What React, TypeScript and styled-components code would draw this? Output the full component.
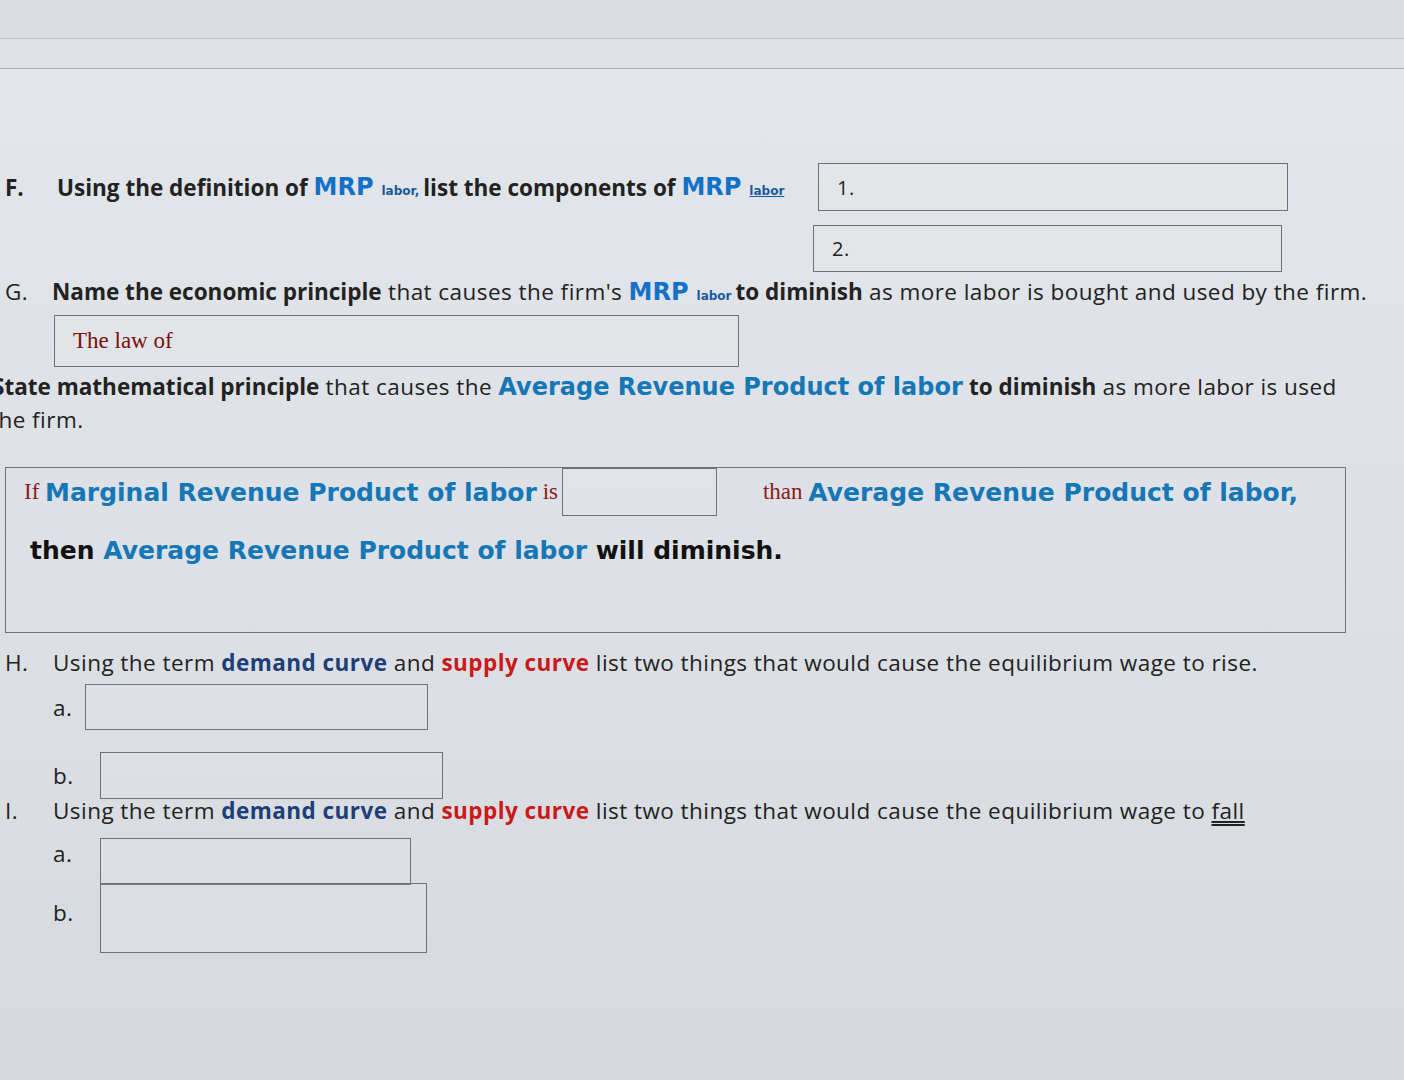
import React from "react";
import styled, { createGlobalStyle } from "styled-components";

const G = createGlobalStyle`
  body { margin:0; background:#dde1e6; font-family:"Open Sans","Liberation Sans",sans-serif; color:#222; }
`;
const Page = styled.div`width:1404px;height:1080px;overflow:hidden;background:linear-gradient(180deg,#e3e6ea 0%,#dcdfe4 60%,#d6dade 100%);`;
const TopBand = styled.div`height:38px;background:#d9dde1;border-bottom:1px solid #b9bec4;`;
const SubBand = styled.div`height:29px;background:#dfe2e6;border-bottom:1px solid #a9b0b7;`;
const Row = styled.div<{ $top?: number; $left?: number }>`
  display:flex;align-items:center;margin-top:${p => p.$top ?? 0}px;padding-left:${p => p.$left ?? 0}px;
  font-size:22.5px;letter-spacing:0.45px;white-space:nowrap;
`;
const Label = styled.span<{ $w: number }>`display:inline-block;width:${p => p.$w}px;`;
const B = styled.b`font-weight:700;letter-spacing:0;`;
const V = styled.span<{ $c?: string; $s?: number }>`font-family:"DejaVu Sans",Verdana,sans-serif;font-weight:700;letter-spacing:0;color:${p => p.$c ?? "#1570c8"};font-size:${p => p.$s ?? 24}px;`;
const Sub = styled.span`font-family:"DejaVu Sans",sans-serif;font-weight:700;font-size:12px;letter-spacing:0;color:#1a5a9c;margin:8px 4px 0 8px;`;
const Box = styled.div<{ $w: number; $h: number; $ml?: number }>`
  flex:none;width:${p => p.$w}px;height:${p => p.$h}px;margin-left:${p => p.$ml ?? 0}px;border:1.5px solid #6d7278;box-sizing:border-box;
  display:flex;align-items:center;padding-left:18px;font-size:20px;background:rgba(255,255,255,0.08);
`;
const Serif = styled.span<{ $c?: string }>`font-family:"Liberation Serif",serif;letter-spacing:0;color:${p => p.$c ?? "#7a1010"};font-size:23px;`;
const Big = styled.div`
  margin:32px 0 0 5px;width:1341px;height:166px;border:1.5px solid #6d7278;box-sizing:border-box;padding:0 0 0 18px;
`;
const Red = styled.b`color:#c81a1a;`;
const Navy = styled.b`color:#1c3f78;`;
const Spacer = styled.span<{ $w: number }>`display:inline-block;width:${p => p.$w}px;`;

export default function App() {
  return (
    <Page>
      <G />
      <TopBand />
      <SubBand />
      <Row $top={94} $left={5} style={{ width: 1283 }}>
        <Label $w={52}><B>F.</B></Label>
        <B>Using the definition of&nbsp;</B><V>MRP</V><Sub>labor,</Sub><B>list the components of&nbsp;</B><V>MRP</V><Sub style={{ textDecoration: "underline" }}>labor</Sub>
        <Box $w={470} $h={48} style={{ marginLeft: "auto" }}>1.</Box>
      </Row>
      <Row $top={14} $left={813}><Box $w={469} $h={47}>2.</Box></Row>
      <Row $top={4} $left={5}>
        <Label $w={47}>G.</Label>
        <B>Name the economic principle</B>&nbsp;that causes the firm's&nbsp;<V>MRP</V><Sub>labor</Sub><B>to diminish</B>&nbsp;as more labor is bought and used by the firm.
      </Row>
      <Row $top={8} $left={54}><Box $w={685} $h={52}><Serif>The law of</Serif></Box></Row>
      <Row $top={4} style={{ marginLeft: -8 }}>
        <B>State mathematical principle</B>&nbsp;that causes the&nbsp;<V $c="#1577b5">Average Revenue Product of labor</V>&nbsp;<B>to diminish</B>&nbsp;as more labor is used
      </Row>
      <Row $top={2} style={{ marginLeft: -10 }}>the firm.</Row>
      <Big>
        <Row>
          <Serif $c="#8a1a1a">If&nbsp;</Serif><V $c="#1577b5" $s={25}>Marginal Revenue Product of labor</V><Serif $c="#8a1a1a">&nbsp;is</Serif>
          <Box $w={155} $h={48} $ml={4} />
          <Spacer $w={46} />
          <Serif $c="#8a1a1a">than&nbsp;</Serif><V $c="#1577b5" $s={25}>Average Revenue Product of labor,</V>
        </Row>
        <Row $top={20} $left={6}>
          <V $c="#111" $s={25}>then&nbsp;</V><V $c="#1577b5" $s={25}>Average Revenue Product of labor</V><V $c="#111" $s={25}>&nbsp;will diminish.</V>
        </Row>
      </Big>
      <Row $top={14} $left={5}>
        <Label $w={48}>H.</Label>Using the term&nbsp;<Navy>demand curve</Navy>&nbsp;and&nbsp;<Red>supply curve</Red>&nbsp;list two things that would cause the equilibrium wage to rise.
      </Row>
      <Row $top={6} $left={53}><Label $w={32}>a.</Label><Box $w={343} $h={46} /></Row>
      <Row $top={22} $left={53}><Label $w={47}>b.</Label><Box $w={343} $h={47} /></Row>
      <Row $top={-4} $left={5}>
        <Label $w={48}>I.</Label>Using the term&nbsp;<Navy>demand curve</Navy>&nbsp;and&nbsp;<Red>supply curve</Red>&nbsp;list two things that would cause the equilibrium wage to&nbsp;<span style={{ textDecoration: "underline double" }}>fall</span>
      </Row>
      <Row $top={12} $left={53} style={{ alignItems: "flex-start" }}><Label $w={47}>a.</Label><Box $w={311} $h={47} /></Row>
      <Row $top={-2} $left={53} style={{ alignItems: "flex-start" }}><Label $w={47} style={{ marginTop: 14 }}>b.</Label><Box $w={327} $h={70} /></Row>
    </Page>
  );
}
